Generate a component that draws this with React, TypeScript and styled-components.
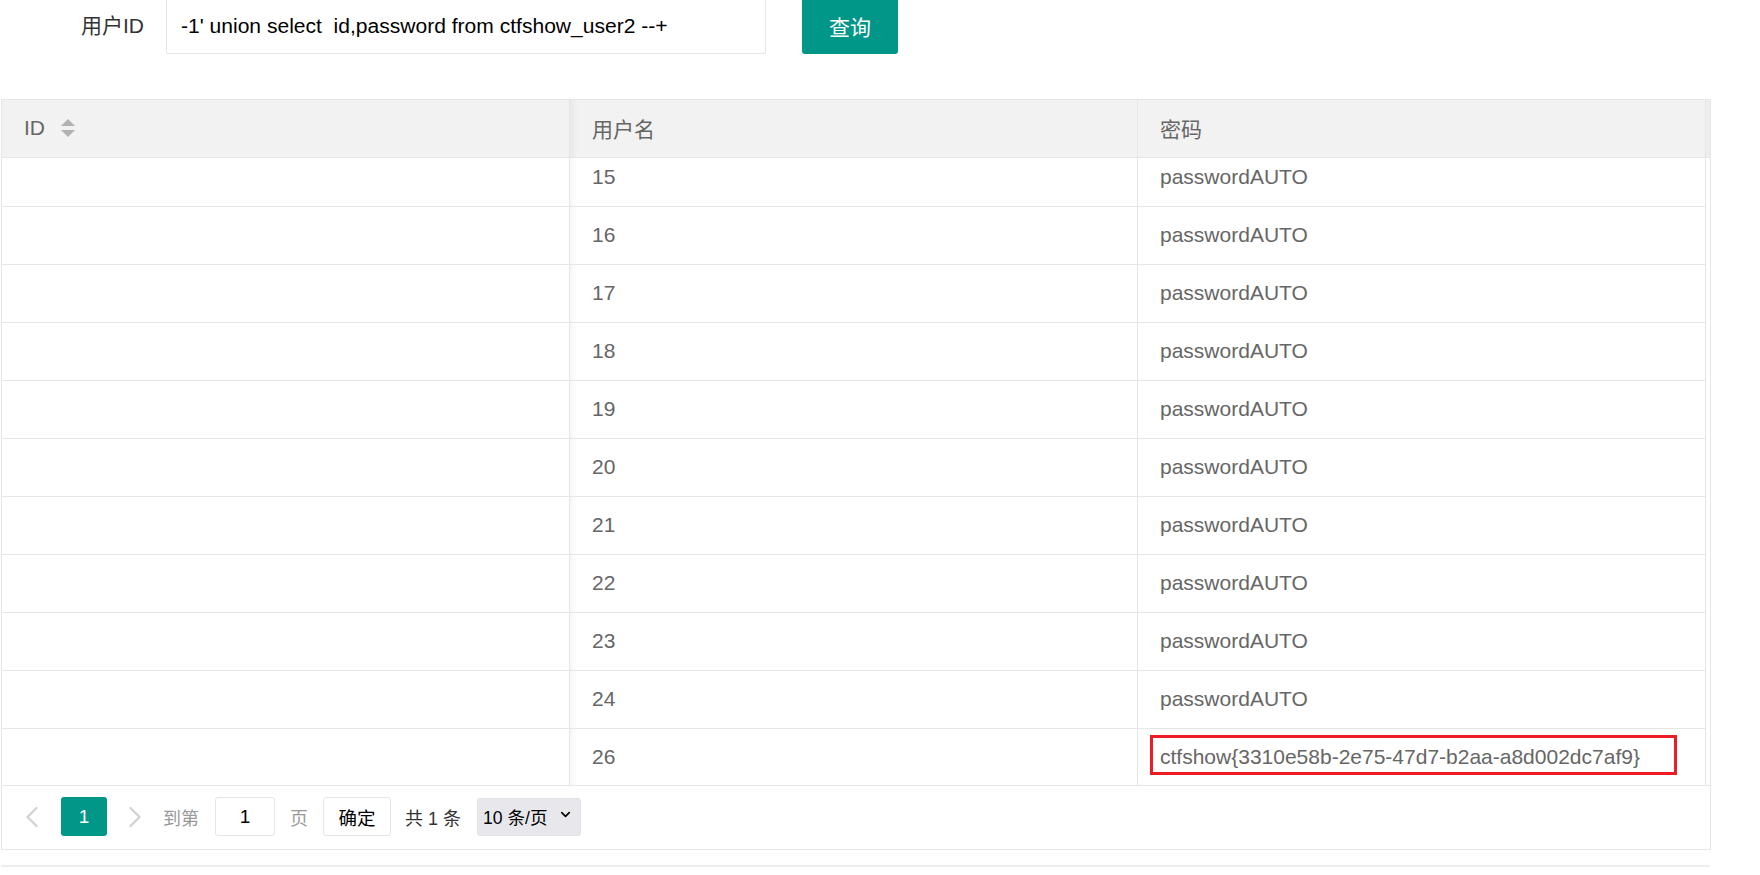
import styled, { createGlobalStyle } from "styled-components";
import { ChevronLeft, ChevronRight, ChevronDown } from "lucide-react";

const GlobalStyle = createGlobalStyle`
  html, body {
    margin: 0;
    padding: 0;
    background: #fff;
    font-family: "Liberation Sans", "Noto Sans CJK SC", sans-serif;
  }
`;

const Page = styled.div`
  width: 1760px;
  height: 875px;
  overflow: hidden;
`;

const SearchForm = styled.form`
  display: flex;
  align-items: stretch;
  height: 56px;
  margin-top: -2px;
`;

const FieldLabel = styled.label`
  width: 144px;
  text-align: right;
  font-size: 21px;
  line-height: 56px;
  color: #333;
`;

const QueryInput = styled.input`
  box-sizing: border-box;
  width: 600px;
  margin-left: 22px;
  padding: 0 14px;
  border: 1px solid #e6e6e6;
  border-radius: 2px;
  outline: none;
  font-family: inherit;
  font-size: 21.05px;
  color: #000;
`;

const QueryButton = styled.button`
  width: 96px;
  margin-left: 36px;
  border: none;
  border-radius: 3px;
  background: #009688;
  color: #fff;
  font-family: inherit;
  font-size: 21px;
`;

const TableBox = styled.div`
  box-sizing: border-box;
  width: 1710px;
  margin: 45px 0 0 1px;
  border: 1px solid #e6e6e6;
`;

const HeaderRow = styled.div`
  display: flex;
  height: 58px;
  box-sizing: border-box;
  background: #f2f2f2;
  border-bottom: 1px solid #e6e6e6;
`;

const HeaderCell = styled.div<{ $shaded?: boolean }>`
  box-sizing: border-box;
  display: flex;
  align-items: center;
  width: 568px;
  padding: 0 0 2px 22px;
  border-right: 1px solid #e6e6e6;
  font-size: 21px;
  color: #666;
  background: ${(p) =>
    p.$shaded
      ? "linear-gradient(to right, rgba(0,0,0,.04), rgba(0,0,0,0) 8px)"
      : "none"};
`;

const Gutter = styled.div`
  flex: 1;
  background: #eee;
`;

const SortIcon = styled.svg`
  width: 14px;
  height: 18px;
  margin-left: 16px;
  fill: #b2b2b2;
`;

const Body = styled.div`
  height: 627px;
  overflow: hidden;
`;

const Rows = styled.div`
  margin-top: -9px;
`;

const Row = styled.div`
  display: flex;
  width: 1704px;
  height: 58px;
  box-sizing: border-box;
  border-bottom: 1px solid #e6e6e6;
`;

const Cell = styled.div<{ $shaded?: boolean }>`
  position: relative;
  box-sizing: border-box;
  display: flex;
  align-items: center;
  width: 568px;
  padding: 0 0 2px 22px;
  border-right: 1px solid #e6e6e6;
  font-size: 21px;
  color: #666;
  background: ${(p) =>
    p.$shaded
      ? "linear-gradient(to right, rgba(0,0,0,.03), rgba(0,0,0,0) 8px)"
      : "none"};
`;

const RedBox = styled.div`
  position: absolute;
  left: 12px;
  top: 6px;
  width: 527px;
  height: 40px;
  box-sizing: border-box;
  border: 3px solid #ed1c24;
`;

const Pager = styled.div`
  display: flex;
  align-items: center;
  height: 61px;
  padding-bottom: 2px;
  border-top: 1px solid #e6e6e6;
  box-sizing: content-box;
  font-size: 18px;
  color: #999;
`;

const Arrow = styled.span<{ $gap: number }>`
  display: flex;
  margin-left: ${(p) => p.$gap}px;
  color: #d2d2d2;
`;

const CurrentPage = styled.span`
  width: 46px;
  height: 39px;
  margin-left: 11px;
  border-radius: 3px;
  background: #009688;
  color: #fff;
  font-size: 19px;
  line-height: 39px;
  text-align: center;
`;

const PagerText = styled.span<{ $gap: number; $dark?: boolean }>`
  margin-left: ${(p) => p.$gap}px;
  color: ${(p) => (p.$dark ? "#333" : "#999")};
  white-space: pre;
`;

const PageInput = styled.input`
  box-sizing: border-box;
  width: 60px;
  height: 39px;
  margin-left: 16px;
  border: 1px solid #e6e6e6;
  border-radius: 3px;
  outline: none;
  font-family: inherit;
  font-size: 19px;
  color: #000;
  text-align: center;
`;

const ConfirmButton = styled.button`
  box-sizing: border-box;
  width: 68px;
  height: 39px;
  margin-left: 15px;
  padding: 0;
  border: 1px solid #e6e6e6;
  border-radius: 3px;
  background: #fff;
  font-family: inherit;
  font-size: 18.5px;
  color: #000;
`;

const PageSize = styled.div`
  box-sizing: border-box;
  display: flex;
  align-items: center;
  justify-content: space-between;
  width: 104px;
  height: 38px;
  margin-left: 16px;
  padding: 0 7px 0 5px;
  border-radius: 3px;
  border: 1px solid #e2e2e6;
  background: #e8e8ec;
  font-size: 17.6px;
  color: #000;
`;

const SizeArrow = styled(ChevronDown)`
  margin-bottom: 4px;
`;

const BottomLine = styled.div`
  width: 1709px;
  height: 2px;
  margin: 15px 0 0 1px;
  background: #eee;
`;

const ids = [15, 16, 17, 18, 19, 20, 21, 22, 23, 24];
const flag = "ctfshow{3310e58b-2e75-47d7-b2aa-a8d002dc7af9}";

export default function App() {
  return (
    <Page>
      <GlobalStyle />
      <SearchForm>
        <FieldLabel>用户ID</FieldLabel>
        <QueryInput
          readOnly
          value="-1' union select  id,password from ctfshow_user2 --+"
        />
        <QueryButton type="button">查询</QueryButton>
      </SearchForm>
      <TableBox>
        <HeaderRow>
          <HeaderCell>
            ID
            <SortIcon viewBox="0 0 14 18">
              <path d="M7 0l7 7H0z" />
              <path d="M0 11h14l-7 7z" />
            </SortIcon>
          </HeaderCell>
          <HeaderCell $shaded>用户名</HeaderCell>
          <HeaderCell>密码</HeaderCell>
          <Gutter />
        </HeaderRow>
        <Body>
          <Rows>
            {ids.map((id) => (
              <Row key={id}>
                <Cell />
                <Cell $shaded>{id}</Cell>
                <Cell>passwordAUTO</Cell>
              </Row>
            ))}
            <Row>
              <Cell />
              <Cell $shaded>26</Cell>
              <Cell>
                {flag}
                <RedBox />
              </Cell>
            </Row>
          </Rows>
        </Body>
        <Pager>
          <Arrow $gap={12}>
            <ChevronLeft size={36} strokeWidth={1.5} />
          </Arrow>
          <CurrentPage>1</CurrentPage>
          <Arrow $gap={10}>
            <ChevronRight size={36} strokeWidth={1.5} />
          </Arrow>
          <PagerText $gap={10}>到第</PagerText>
          <PageInput readOnly value="1" />
          <PagerText $gap={15}>页</PagerText>
          <ConfirmButton type="button">确定</ConfirmButton>
          <PagerText $gap={14} $dark>
            共 1 条
          </PagerText>
          <PageSize>
            10 条/页
            <SizeArrow size={15} strokeWidth={2.6} />
          </PageSize>
        </Pager>
      </TableBox>
      <BottomLine />
    </Page>
  );
}
